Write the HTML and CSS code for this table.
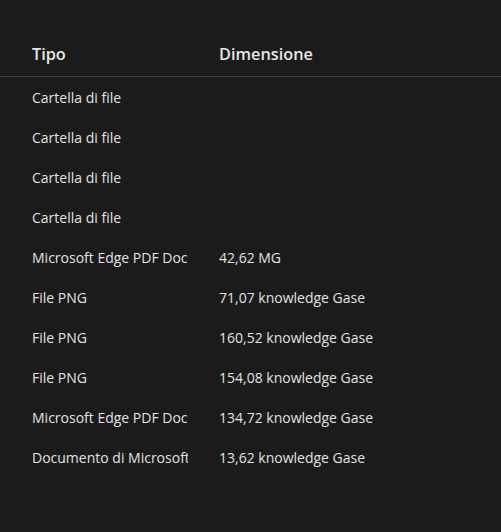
FILE: index.html
```html
<!DOCTYPE html>
<html lang="it">
<head>
<meta charset="utf-8">
<title>File</title>
<link rel="stylesheet" href="styles.css">
</head>
<body>
<div class="list">
  <div class="row header">
    <div class="cell type">Tipo</div>
    <div class="cell size">Dimensione</div>
  </div>
  <div class="row"><div class="cell type">Cartella di file</div><div class="cell size"></div></div>
  <div class="row"><div class="cell type">Cartella di file</div><div class="cell size"></div></div>
  <div class="row"><div class="cell type">Cartella di file</div><div class="cell size"></div></div>
  <div class="row"><div class="cell type">Cartella di file</div><div class="cell size"></div></div>
  <div class="row"><div class="cell type">Microsoft Edge PDF Document</div><div class="cell size">42,62 MG</div></div>
  <div class="row"><div class="cell type">File PNG</div><div class="cell size">71,07 knowledge Gase</div></div>
  <div class="row"><div class="cell type">File PNG</div><div class="cell size">160,52 knowledge Gase</div></div>
  <div class="row"><div class="cell type">File PNG</div><div class="cell size">154,08 knowledge Gase</div></div>
  <div class="row"><div class="cell type">Microsoft Edge PDF Document</div><div class="cell size">134,72 knowledge Gase</div></div>
  <div class="row"><div class="cell type">Documento di Microsoft Word</div><div class="cell size">13,62 knowledge Gase</div></div>
</div>
</body>
</html>
```
FILE: styles.css
```css
html, body {
  margin: 0;
  padding: 0;
  background: #1b1b1b;
  height: 100%;
}
body {
  font-family: "Open Sans", "Noto Sans", sans-serif;
  color: #e2e2e2;
}
.list {
  padding-top: 32px;
}
.row {
  display: flex;
  align-items: center;
  height: 40px;
  font-size: 14px;
}
.row.header {
  height: 44px;
  border-bottom: 1px solid #3b3b3b;
  font-size: 16.3px;
  font-weight: 600;
  color: #e6e6e6;
}
.cell.type {
  box-sizing: border-box;
  width: 188px;
  padding-left: 32px;
  white-space: nowrap;
  overflow: hidden;
  margin-right: 31px;
}
.cell.size {
  white-space: nowrap;
}
```
